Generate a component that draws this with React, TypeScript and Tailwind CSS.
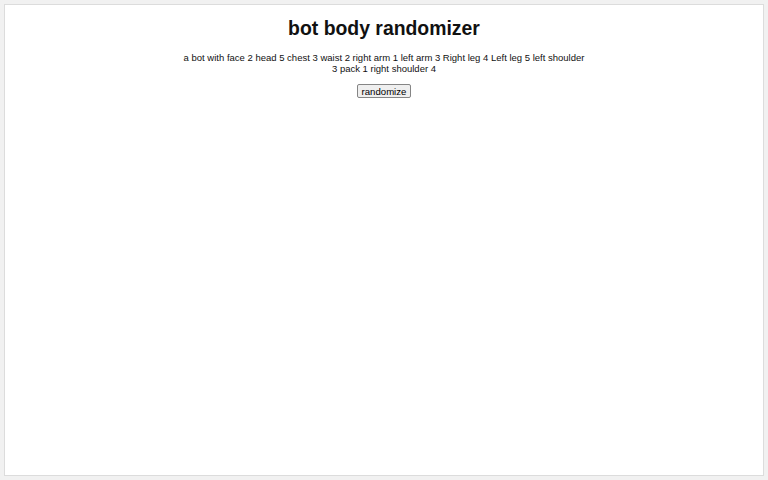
import { useState } from "react";

const parts = [
  ["face", 5],
  ["head", 5],
  ["chest", 5],
  ["waist", 5],
  ["right arm", 5],
  ["left arm", 5],
  ["Right leg", 5],
  ["Left leg", 5],
  ["left shoulder", 5],
  ["pack", 5],
  ["right shoulder", 5],
] as const;

const start = [2, 5, 3, 2, 1, 3, 4, 5, 3, 1, 4];

export default function App() {
  const [picks, setPicks] = useState<number[]>(start);

  const roll = () =>
    setPicks(parts.map(([, max]) => Math.floor(Math.random() * max) + 1));

  const line =
    "a bot with " + parts.map(([name], i) => `${name} ${picks[i]}`).join(" ");

  return (
    <div className="h-screen w-full bg-[#f1f1f1] p-[4px] font-['Liberation_Sans',Arial,sans-serif] text-[#111]">
      <div className="flex h-full flex-col items-center border border-[#dcdcdc] bg-white">
        <h1 className="mt-[12px] text-[19.4px] font-bold leading-[22px]">
          bot body randomizer
        </h1>
        <p className="mt-[13px] max-w-[405px] text-center text-[9.5px] leading-[11px]">
          {line}
        </p>
        <button
          onClick={roll}
          className="mt-[10px] h-[14px] rounded-[2px] border border-[#858585] bg-[#efefef] px-[4px] text-[9.6px] leading-[11px] text-black"
        >
          randomize
        </button>
      </div>
    </div>
  );
}
